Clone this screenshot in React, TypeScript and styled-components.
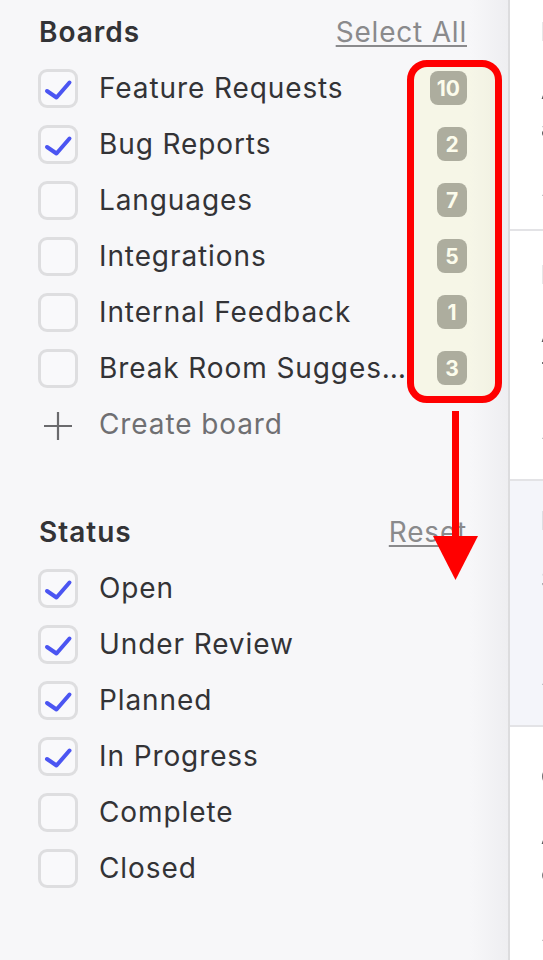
import React from "react";
import styled, { createGlobalStyle } from "styled-components";

const Global = createGlobalStyle`
  html, body { margin: 0; padding: 0; height: 100%; }
  body { font-family: Inter, "Noto Sans", sans-serif; -webkit-font-smoothing: antialiased; }
  #root { height: 100%; }
`;

const Page = styled.div`
  position: relative;
  display: flex;
  height: 960px;
  width: 543px;
  overflow: hidden;
`;

const Sidebar = styled.aside`
  width: 510px;
  flex: 0 0 510px;
  box-sizing: border-box;
  padding: 12px 41px 0 38px;
  background: linear-gradient(to right, #f7f7f9 0, #f7f7f9 470px, #eeeef1 508px);
  border-right: 2px solid #dcdcde;
  display: flex;
  flex-direction: column;
`;

const Section = styled.section<{ $gap?: number }>`
  display: flex;
  flex-direction: column;
  margin-top: ${(p) => p.$gap ?? 0}px;
`;

const SectionHeader = styled.div`
  display: flex;
  align-items: center;
  justify-content: space-between;
  height: 40px;
  margin-bottom: 8px;
`;

const Heading = styled.h2`
  margin: 0 0 0 1px;
  font-size: 28px;
  line-height: 40px;
  font-weight: 600;
  color: #333336;
  letter-spacing: 1px;
`;

const TextLink = styled.span`
  font-size: 28px;
  line-height: 40px;
  color: #8a8a8c;
  text-decoration: underline;
  text-decoration-thickness: 2px;
  text-underline-offset: 3px;
  letter-spacing: 0.8px;
`;

const Row = styled.div`
  display: flex;
  align-items: center;
  height: 56px;
`;

const Box = styled.span<{ $checked: boolean }>`
  box-sizing: border-box;
  width: 40px;
  height: 39px;
  flex: 0 0 40px;
  border: 3px solid #dedee0;
  border-radius: 9px;
  background: #f9f9fb;
  margin-right: 21px;
  display: flex;
  align-items: center;
  justify-content: center;
`;

const Label = styled.span<{ $muted?: boolean }>`
  flex: 1;
  min-width: 0;
  font-size: 28px;
  line-height: 40px;
  color: ${(p) => (p.$muted ? "#6f6f72" : "#333336")};
  letter-spacing: 0.9px;
  white-space: nowrap;
  overflow: hidden;
  text-overflow: ellipsis;
`;

const BadgeSlot = styled.span`
  flex: 0 0 41px;
  margin-left: 12px;
  display: flex;
  justify-content: flex-end;
`;

const Badge = styled.span`
  box-sizing: border-box;
  min-width: 30px;
  height: 34px;
  padding: 0 7px;
  border-radius: 8px;
  background: #969697;
  color: #ffffff;
  font-size: 21px;
  font-weight: 700;
  display: flex;
  align-items: center;
  justify-content: center;
`;

const PlusSlot = styled.span`
  width: 40px;
  flex: 0 0 40px;
  margin-right: 21px;
  display: flex;
  align-items: center;
  justify-content: center;
  padding-top: 3px;
`;

const Feed = styled.main`
  flex: 1;
  background: #ffffff;
  display: flex;
  flex-direction: column;
  overflow: hidden;
`;

const Card = styled.article<{ $top: number; $h: number; $tint?: boolean }>`
  box-sizing: border-box;
  height: ${(p) => p.$h}px;
  flex: 0 0 ${(p) => p.$h}px;
  padding: ${(p) => p.$top}px 0 0 31px;
  background: ${(p) => (p.$tint ? "#f4f5fa" : "#ffffff")};
  border-bottom: 2px solid #e3e3e6;
  white-space: nowrap;
`;

const CardText = styled.div`
  will-change: transform;
  transform: translateZ(0);
  background: transparent;
`;

const CardTitle = styled(CardText)`
  font-size: 26px;
  line-height: 40px;
  font-weight: 600;
  color: #333336;
`;

const CardDesc = styled(CardText)`
  margin-top: 20px;
  font-size: 24px;
  line-height: 38px;
  color: #555558;
`;

const CardMeta = styled(CardText)`
  margin-top: 26px;
  font-size: 20px;
  line-height: 30px;
  color: #b0b0b4;
`;

const Highlight = styled.div`
  position: absolute;
  left: 407px;
  top: 60px;
  width: 95px;
  height: 343px;
  box-sizing: border-box;
  border: 7px solid #ff0000;
  border-radius: 20px;
  background: rgba(245, 245, 180, 0.25);
  pointer-events: none;
`;

const ArrowSvg = styled.svg`
  position: absolute;
  left: 430px;
  top: 408px;
  pointer-events: none;
`;

const Check = () => (
  <svg width="34" height="33" viewBox="0 0 34 33">
    <path
      d="M6 19 L15.5 25.5 L28.5 10.5"
      fill="none"
      stroke="#4b55f2"
      strokeWidth="4"
      strokeLinecap="round"
      strokeLinejoin="round"
    />
  </svg>
);

type Item = { label: string; checked: boolean; count?: number };

const boards: Item[] = [
  { label: "Feature Requests", checked: true, count: 10 },
  { label: "Bug Reports", checked: true, count: 2 },
  { label: "Languages", checked: false, count: 7 },
  { label: "Integrations", checked: false, count: 5 },
  { label: "Internal Feedback", checked: false, count: 1 },
  { label: "Break Room Suggestions", checked: false, count: 3 },
];

const statuses: Item[] = [
  { label: "Open", checked: true },
  { label: "Under Review", checked: true },
  { label: "Planned", checked: true },
  { label: "In Progress", checked: true },
  { label: "Complete", checked: false },
  { label: "Closed", checked: false },
];

const FilterRow = ({ item }: { item: Item }) => (
  <Row>
    <Box $checked={item.checked}>{item.checked && <Check />}</Box>
    <Label>{item.label}</Label>
    {item.count !== undefined && (
      <BadgeSlot>
        <Badge>{item.count}</Badge>
      </BadgeSlot>
    )}
  </Row>
);

const cards = [
  { top: 12, h: 231, tint: false, title: "Dark mode for dashboard", desc: ["Allow users to switch the", "appearance of the app"], meta: "▲ 24 · 3 comments" },
  { top: 24, h: 250, tint: false, title: "Bulk edit posts", desc: ["As an admin I want to", "Tag many posts at once"], meta: "▲ 18 · 5 comments" },
  { top: 20, h: 246, tint: true, title: "Export to CSV", desc: ["Some customers need to", "Import data elsewhere"], meta: "▲ 12 · 1 comment" },
  { top: 30, h: 240, tint: false, title: "Calendar view", desc: ["A way to see upcoming", "changes by date"], meta: "▲ 9 · 2 comments" },
];

export default function App() {
  return (
    <>
      <Global />
      <Page>
        <Sidebar>
          <Section>
            <SectionHeader>
              <Heading>Boards</Heading>
              <TextLink>Select All</TextLink>
            </SectionHeader>
            {boards.map((b) => (
              <FilterRow key={b.label} item={b} />
            ))}
            <Row>
              <PlusSlot>
                <svg width="30" height="30" viewBox="0 0 30 30">
                  <path d="M15 1 V29 M1 15 H29" stroke="#6a6a6d" strokeWidth="2.2" />
                </svg>
              </PlusSlot>
              <Label $muted>Create board</Label>
            </Row>
          </Section>
          <Section $gap={60}>
            <SectionHeader>
              <Heading>Status</Heading>
              <TextLink>Reset</TextLink>
            </SectionHeader>
            {statuses.map((s) => (
              <FilterRow key={s.label} item={s} />
            ))}
          </Section>
        </Sidebar>
        <Feed>
          {cards.map((c) => (
            <Card key={c.title} $top={c.top} $h={c.h} $tint={c.tint}>
              <CardTitle>{c.title}</CardTitle>
              <CardDesc>
                {c.desc[0]}
                <br />
                {c.desc[1]}
              </CardDesc>
              <CardMeta>{c.meta}</CardMeta>
            </Card>
          ))}
        </Feed>
        <Highlight />
        <ArrowSvg width="52" height="176" viewBox="0 0 52 176">
          <rect x="22" y="3" width="7" height="132" fill="#ff0000" />
          <polygon points="3,128 48,128 25.5,172" fill="#ff0000" />
        </ArrowSvg>
      </Page>
    </>
  );
}
